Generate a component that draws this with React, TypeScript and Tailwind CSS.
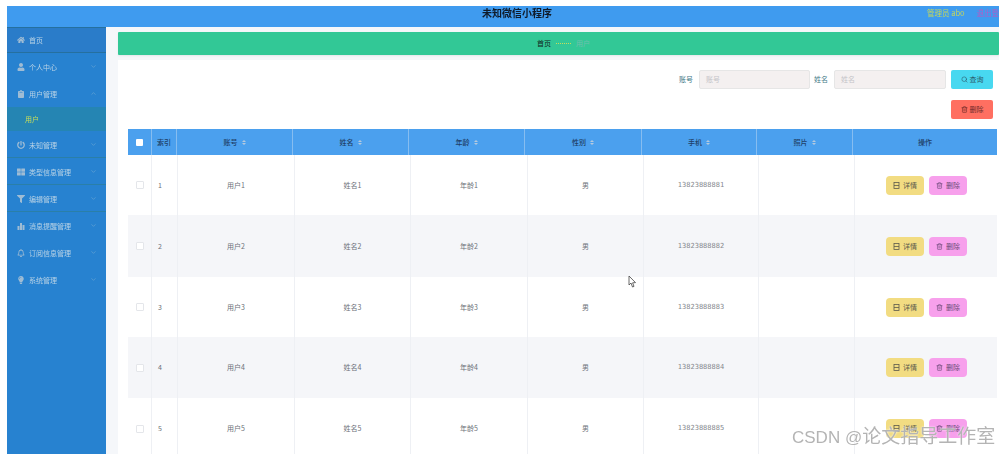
import { ChevronDown, ChevronUp, Search, Trash2 } from "lucide-react";
import type { ComponentType } from "react";
import { FaClipboard, FaFilter, FaHome, FaLightbulb, FaPowerOff, FaRegBell, FaThLarge, FaUser } from "react-icons/fa";

type IconType = ComponentType<{ size?: number; className?: string }>;

const Bars: IconType = ({ size, className }) => (
  <svg width={size} height={size} viewBox="0 0 8 8" className={className} fill="currentColor">
    <rect x="0.5" y="4" width="2" height="4" />
    <rect x="3" y="1" width="2" height="7" />
    <rect x="5.5" y="3" width="2" height="5" />
  </svg>
);

const DocIcon = () => (
  <svg width="7" height="7" viewBox="0 0 7 7" fill="none" stroke="currentColor" strokeWidth="0.8">
    <rect x="1" y="0.5" width="5" height="6" />
    <path d="M1 3.5 H6" />
  </svg>
);

const topMenus = [
  { name: "个人中心", icon: FaUser },
  { name: "用户管理", icon: FaClipboard, open: true },
];
const menus = [
  { name: "未知管理", icon: FaPowerOff, line: true },
  { name: "类型信息管理", icon: FaThLarge, line: true },
  { name: "编辑管理", icon: FaFilter, line: true },
  { name: "消息提醒管理", icon: Bars },
  { name: "订阅信息管理", icon: FaRegBell },
  { name: "系统管理", icon: FaLightbulb },
];

const headCols = "grid grid-cols-[24px_25px_116px_116px_116px_117px_115px_96px_144px]";
const rowCols = "grid grid-cols-[24px_26px_117px_116px_117px_116px_115px_96px_142px]";

const heads = [
  { t: "账号", s: true },
  { t: "姓名", s: true },
  { t: "年龄", s: true },
  { t: "性别", s: true },
  { t: "手机", s: true },
  { t: "照片", s: true },
  { t: "操作", s: false },
];

const rows = [
  { n: 1, h: "h-[60px]", bg: "bg-white" },
  { n: 2, h: "h-[62px]", bg: "bg-[#f5f6f9]" },
  { n: 3, h: "h-[60px]", bg: "bg-white" },
  { n: 4, h: "h-[61px]", bg: "bg-[#f5f6f9]" },
  { n: 5, h: "h-[61px]", bg: "bg-white" },
];

const Sort = () => (
  <span className="flex flex-col gap-[1px]">
    <span className="w-0 h-0 border-x-[2px] border-x-transparent border-b-[2px] border-b-[#b5c9de]" />
    <span className="w-0 h-0 border-x-[2px] border-x-transparent border-t-[2px] border-t-[#b5c9de]" />
  </span>
);

const MenuRow = ({ name, Icon, open, line }: { name: string; Icon: IconType; open?: boolean; line?: boolean }) => (
  <div
    className={`h-[27px] pt-[1px] flex items-center pl-[10px] pr-[9px] text-[#b9d3e6] text-[7px] ${
      line ? "shadow-[inset_0_-1px_0_#2a7fa8]" : ""
    }`}
  >
    <span className="w-[8px] mr-[4px] flex justify-center">
      <Icon size={8} className="text-[#9fbcd4]" />
    </span>
    <span className="flex-1">{name}</span>
    {open ? <ChevronUp size={7} className="text-[#6fa8d4] -mt-[2px]" /> : <ChevronDown size={7} className="text-[#6fa8d4] -mt-[2px]" />}
  </div>
);

const App = () => {
  return (
    <div
      className="relative w-[999px] h-[454px] overflow-hidden bg-white"
      style={{ fontFamily: '"Noto Sans CJK SC", "Noto Sans", sans-serif' }}
    >
      <div className="w-full h-full pt-[6px] pl-[7px] flex flex-col blur-[0.35px]">
        <header className="h-[21px] shrink-0 bg-[#3f9bef] flex items-start relative">
          <h1 className="flex-1 text-center text-[10px] leading-[13px] font-bold text-[#0f1b2a] pl-[28px]">未知微信小程序</h1>
          <div className="absolute left-[920px] top-0 text-[7.5px] leading-[13px] flex gap-[12px] whitespace-nowrap">
            <span className="text-[#c3d65c]">管理员 abo</span>
            <span className="text-[#b05fc6]">退出登录</span>
          </div>
        </header>

        <div className="flex flex-1 min-h-0">
          <aside className="w-[99px] shrink-0 bg-[#2782d0] shadow-[1px_0_1px_#7fb4e0]">
            <div className="h-[26px] flex items-center pl-[10px] bg-[#2a7cc9] border-y border-[#25709f] text-[#b9d3e6] text-[7px]">
              <span className="w-[8px] mr-[4px] flex justify-center">
                <FaHome size={8} className="text-[#9fbcd4]" />
              </span>
              首页
            </div>
            {topMenus.map((m) => (
              <MenuRow key={m.name} name={m.name} Icon={m.icon} open={m.open} />
            ))}
            <div className="h-[24px] flex items-center pl-[18px] bg-[#2585b3] text-[#c6dd5a] text-[7px]">用户</div>
            {menus.map((m) => (
              <MenuRow key={m.name} name={m.name} Icon={m.icon} line={m.line} />
            ))}
          </aside>

          <main className="flex-1 min-w-0 bg-[#f5f7fa] pl-[12px] pt-[5px]">
            <div className="h-[23px] bg-[#32c896] flex items-center justify-center text-[7px] pl-[10px] rounded-[1px] shadow-[0_1px_2px_#e3e6ea]">
              <span className="text-[#0f1f18]">首页</span>
              <span className="w-[15px] mx-[5px] border-t border-dotted border-[#c8dc5a] -mt-[1px]" />
              <span className="text-[#6fbfae]">用户</span>
            </div>

            <section className="mt-[5px] h-[400px] bg-white pl-[10px] pr-[2px]">
              <div className="h-[69px]">
                <div className="flex items-center justify-end pt-[10px] pr-[4px] text-[7px] text-[#3f7a88]">
                  <span className="mr-[6px]">账号</span>
                  <div className="w-[111px] h-[19px] bg-[#f4f0f0] border border-[#e6e6e6] rounded-[2px] flex items-center pl-[6px] text-[#c4c4c8]">账号</div>
                  <span className="ml-[4px] mr-[6px]">姓名</span>
                  <div className="w-[112px] h-[19px] bg-[#f4f0f0] border border-[#e6e6e6] rounded-[2px] flex items-center pl-[6px] text-[#c4c4c8]">姓名</div>
                  <button className="ml-[5px] w-[42px] h-[19px] bg-[#48d8f0] rounded-[2px] flex items-center justify-center gap-[2px] text-[#2c5a6a]">
                    <Search size={7} />
                    查询
                  </button>
                </div>
                <div className="flex justify-end pt-[11px] pr-[4px]">
                  <button className="w-[42px] h-[19px] bg-[#ff6f61] rounded-[2px] flex items-center justify-center gap-[2px] text-[7px] text-[#6e2c2a]">
                    <Trash2 size={7} />
                    删除
                  </button>
                </div>
              </div>

              <div className={`${headCols} h-[26px] bg-[#4ba0ee] text-[7px] text-[#1f3f66] font-medium`}>
                <div className="border-r border-[#86bdf0] flex items-center justify-center">
                  <span className="w-[7px] h-[7px] bg-white rounded-[1px]" />
                </div>
                <div className="border-r border-[#86bdf0] flex items-center justify-center">索引</div>
                {heads.map((h) => (
                  <div key={h.t} className="border-r border-[#86bdf0] flex items-center justify-center gap-[4px] last:border-r-0">
                    {h.t}
                    {h.s && <Sort />}
                  </div>
                ))}
              </div>

              {rows.map((r) => (
                <div key={r.n} className={`${rowCols} ${r.h} ${r.bg} text-[7px] text-[#6d7179]`}>
                  <div className="border-r border-[#eef0f4] flex items-center justify-center">
                    <span className="w-[8px] h-[8px] bg-white border border-[#e4e6ea] rounded-[1px]" />
                  </div>
                  <div className="border-r border-[#eef0f4] flex items-center pl-[6px]">{r.n}</div>
                  <div className="border-r border-[#eef0f4] flex items-center justify-center">用户{r.n}</div>
                  <div className="border-r border-[#eef0f4] flex items-center justify-center">姓名{r.n}</div>
                  <div className="border-r border-[#eef0f4] flex items-center justify-center">年龄{r.n}</div>
                  <div className="border-r border-[#eef0f4] flex items-center justify-center">男</div>
                  <div className="border-r border-[#eef0f4] flex items-center justify-center text-[#85888e]" style={{ fontFamily: '"DejaVu Sans Mono", monospace' }}>
                    {`1382388888${r.n}`}
                  </div>
                  <div className="border-r border-[#eef0f4]" />
                  <div className="flex items-center pl-[31px] gap-[5px] text-[#5c5a4c]">
                    <button className="w-[38px] h-[19px] bg-[#f2dc82] rounded-[4px] flex items-center justify-center gap-[3px]">
                      <DocIcon />
                      详情
                    </button>
                    <button className="w-[38px] h-[19px] bg-[#f7a0ec] rounded-[4px] flex items-center justify-center gap-[3px] text-[#6b4a78]">
                      <Trash2 size={7} />
                      删除
                    </button>
                  </div>
                </div>
              ))}
            </section>
          </main>
        </div>
      </div>

      <svg className="absolute left-[628px] top-[275px]" width="9" height="13" viewBox="0 0 9 13">
        <path d="M1 1 L1 10 L3 8 L4.5 12 L6 11.4 L4.6 7.8 L7.5 7.6 Z" fill="#fff" stroke="#444" strokeWidth="0.8" />
      </svg>
      <div
        className="absolute left-[792px] top-[424px] text-[17px] leading-[26px] text-[#b4b4b4] whitespace-nowrap"
        style={{ textShadow: "0 0 2px #fff", fontFamily: '"Liberation Sans", "Noto Sans CJK SC", sans-serif' }}
      >
        CSDN @<span className="text-[19px]">论文指导工作室</span>
      </div>
    </div>
  );
};

export default App;
